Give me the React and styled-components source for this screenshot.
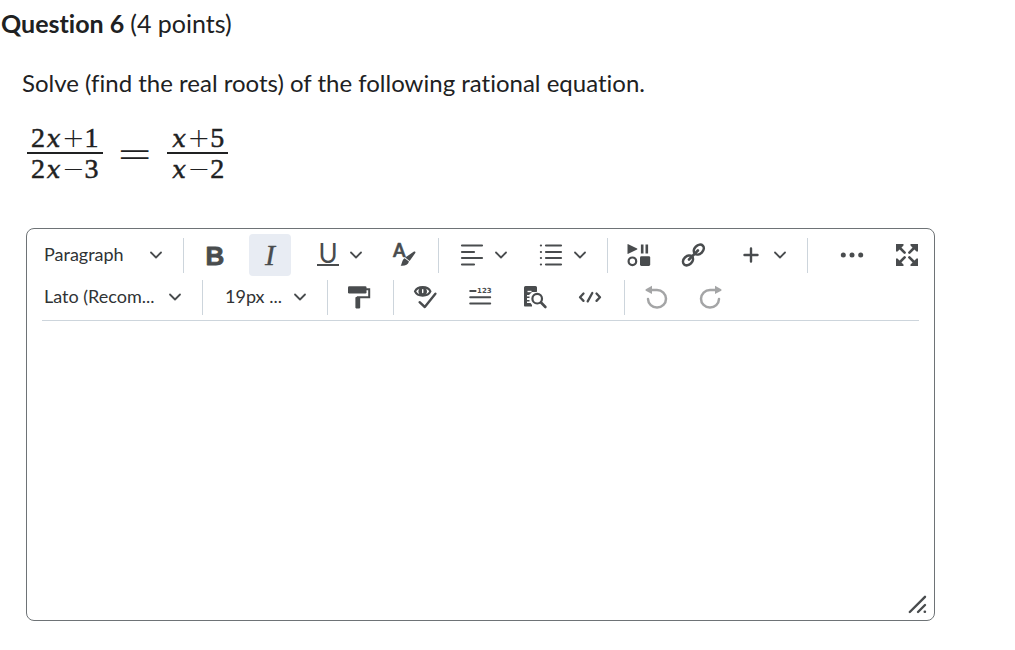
import React from 'react'
import styled, {createGlobalStyle} from 'styled-components'

const ICON = '#494c4e'
const LINE = '#cdd5dc'

const GlobalStyle = createGlobalStyle`
    *{
        box-sizing:border-box;
    }
    body{
        margin:0;
        background:#fff;
        color:#202122;
        font-family:Lato, sans-serif;
        font-variant-ligatures:none;
    }
`

const Page = styled.main`
    padding:8px 80px 24px 0;
`

const Heading = styled.h2`
    margin:0 0 30px;
    padding-left:1px;
    font-size:25px;
    line-height:30px;
    font-weight:700;
    span{
        font-weight:400;
    }
`

const Prompt = styled.p`
    margin:0 0 26px;
    padding-left:22px;
    font-size:24px;
    line-height:30px;
`

const Equation = styled.div`
    display:flex;
    align-items:center;
    gap:18px;
    margin:0 0 44px 27px;
    font-family:"Liberation Serif", serif;
    font-size:28px;
`

const Fraction = styled.span`
    display:flex;
    flex-direction:column;
`

const Term = styled.span`
    height:30px;
    padding:0 4px;
    border-bottom:${({over}) => over ? '2px solid #202122' : 0};
    line-height:${({over}) => over ? 28 : 30}px;
    text-align:center;
    white-space:nowrap;
    -webkit-text-stroke:.5px #202122;
    i{
        font-family:"DejaVu Math TeX Gyre", "Liberation Serif", serif;
        font-style:normal;
        font-size:24px;
        line-height:0;
    }
`

const Operator = styled.span`
    font-family:"DejaVu Sans", sans-serif;
    font-weight:200;
    font-size:27px;
    line-height:0;
    -webkit-text-stroke:0;
`

const Equals = styled(Operator)`
    display:flex;
    justify-content:center;
    width:28px;
    font-size:44px;
    line-height:28px;
`

const Editor = styled.section`
    position:relative;
    margin-left:26px;
    border:1px solid #6e7376;
    border-radius:8px;
    padding:5px 6px 5px 5px;
`

const Row = styled.div`
    display:flex;
    align-items:center;
    height:42px;
    gap:13px;
`

const Divider = styled.span`
    width:1px;
    height:35px;
    margin-right:-3px;
    background:${LINE};
`

const Tool = styled.button`
    display:flex;
    align-items:center;
    justify-content:${({split}) => split ? 'space-between' : 'center'};
    width:${({split}) => split ? 66 : 42}px;
    height:42px;
    padding:${({split}) => split ? '0 7px 0 11px' : 0};
    border:0;
    border-radius:4px;
    background:${({active}) => active ? '#e8ecf3' : 'transparent'};
    color:${ICON};
    &:disabled{
        color:#a4a5a6;
    }
    svg{
        flex:none;
        overflow:visible;
    }
`

const End = styled.div`
    display:flex;
    gap:13px;
    margin-left:auto;
`

const Picker = styled.label`
    display:grid;
    align-items:center;
    width:${({width}) => width}px;
    select, svg{
        grid-area:1 / 1;
    }
    svg{
        justify-self:end;
        margin-right:7px;
        color:${ICON};
        pointer-events:none;
    }
    select{
        appearance:none;
        width:100%;
        height:42px;
        padding:0 0 2px 12px;
        border:0;
        background:transparent;
        color:#303335;
        font-family:Lato, sans-serif;
        font-size:18px;
    }
`

const Rule = styled.hr`
    height:1px;
    margin:2px 9px 0 10px;
    border:0;
    background:${LINE};
`

const Answer = styled.textarea`
    display:block;
    width:100%;
    height:294px;
    padding:16px;
    border:0;
    outline:0;
    resize:none;
    background:transparent;
    font-family:Lato, sans-serif;
    font-size:18px;
`

const Grip = styled.svg`
    position:absolute;
    right:6px;
    bottom:5px;
`

const Icon = ({children}) => (
    <svg width="24" height="24" viewBox="0 0 24 24" fill="none" stroke="currentColor"
        strokeWidth="2.2" strokeLinecap="round" strokeLinejoin="round" aria-hidden="true">
        {children}
    </svg>
)

const Chevron = () => (
    <svg width="14" height="14" viewBox="0 0 14 14" fill="none" stroke="currentColor"
        strokeWidth="1.8" strokeLinecap="round" strokeLinejoin="round" aria-hidden="true">
        <path d="M2 4.5 7 9.5 12 4.5"/>
    </svg>
)

const Letter = ({children, ...rest}) => (
    <text fill="currentColor" stroke="none" textAnchor="middle" {...rest}>{children}</text>
)

const icons = {
    bold:<Letter x="12" y="22" fontFamily="Liberation Sans" fontWeight="700" fontSize="26" stroke="currentColor" strokeWidth=".8">B</Letter>,
    italic:<Letter x="12" y="22" fontFamily="Liberation Serif" fontStyle="italic" fontSize="30" stroke="currentColor" strokeWidth=".3">I</Letter>,
    underline:<>
        <Letter x="13" y="19.5" fontFamily="Lato" fontSize="26">U</Letter>
        <path d="M2 22H24" strokeWidth="2" strokeLinecap="butt"/>
    </>,
    brush:<>
        <Letter x="7.2" y="13.6" fontFamily="Lato" fontWeight="700" fontSize="18" stroke="currentColor" strokeWidth=".5">A</Letter>
        <path d="M21.6 8.8C22.6 7.8 24 8.8 23.3 10L17.6 18 13.2 14.6Z" fill="currentColor" stroke="none"/>
        <path d="M12.6 15.2 17 18.6C16 22 13 23.2 8.6 22.8 10 21.2 9.8 17 12.6 15.2Z" fill="currentColor" stroke="none"/>
    </>,
    align:<path d="M2 2.5H22M2 9H14M2 15H22M2 21.5H14"/>,
    list:<path d="M7 2.5H22M7 9H22M7 15H22M7 21.5H22M1.9 2.5H2M1.9 9H2M1.9 15H2M1.9 21.5H2"/>,
    media:<>
        <path d="M.5 1.5Q.5 .8 1.3 1.2L10.1 5.5Q10.8 6 10.1 6.5L1.3 10.8Q.5 11.2 .5 10.5Z" fill="currentColor" stroke="none"/>
        <path d="M15.2 1.5V10.5M19.8 1.5V10.5" strokeWidth="2.6" strokeLinecap="butt"/>
        <circle cx="5.4" cy="18.3" r="3.8"/>
        <rect x="13" y="13.2" width="10.2" height="9.8" rx="1.4" fill="currentColor" stroke="none"/>
    </>,
    link:<g strokeWidth="2.6">
        <ellipse cx="16.8" cy="6.6" rx="5.6" ry="4.2" transform="rotate(-45 16.8 6.6)"/>
        <ellipse cx="6" cy="17.4" rx="5.6" ry="4.2" transform="rotate(-45 6 17.4)"/>
        <path d="M7 16.5 15.9 7.5"/>
    </g>,
    plus:<path d="M12 5.5V18.5M5.5 12H18.5" strokeWidth="2.4"/>,
    more:<g fill="currentColor" stroke="none">
        <circle cx="3.3" cy="12" r="2.5"/><circle cx="12" cy="12" r="2.5"/><circle cx="20.7" cy="12" r="2.5"/>
    </g>,
    expand:<>
        <path d="M5 5 9.6 9.6M19 5 14.4 9.6M5 19 9.6 14.4M19 19 14.4 14.4" strokeWidth="2.6"/>
        <path d="M1 1H8.5V2.5L2.5 8.5H1ZM23 1H15.5V2.5L21.5 8.5H23ZM1 23H8.5V21.5L2.5 15.5H1ZM23 23H15.5V21.5L21.5 15.5H23Z" fill="currentColor" stroke="none"/>
    </>,
    roller:<>
        <rect x="1" y="1.2" width="18.5" height="7.2" rx="1.2" fill="currentColor" stroke="none"/>
        <path d="M19 4.2H22.2V12.2H10.8V16" strokeWidth="2" strokeLinejoin="miter" strokeLinecap="butt"/>
        <rect x="8.4" y="12" width="4.8" height="11.4" rx=".8" fill="currentColor" stroke="none"/>
    </>,
    spelling:<>
        <path d="M2 6.4C4.5 .8 14.9 .8 17.4 6.4 14.9 12 4.5 12 2 6.4Z"/>
        <circle cx="9.7" cy="6.4" r="4.3" fill="currentColor" stroke="none"/>
        <path d="M9.7 4.8V7.6" stroke="#fff" strokeWidth="1.4"/>
        <path d="M6.6 17.2 11.8 22 22.4 8.8" strokeWidth="2.4"/>
    </>,
    count:<>
        <path d="M2.2 6H7.6M2.2 12.2H22.2M2.2 18.4H22.2" strokeWidth="2"/>
        <Letter x="16.4" y="8.4" fontFamily="DejaVu Sans" fontWeight="700" fontSize="7">123</Letter>
    </>,
    preview:<>
        <path d="M2.5 1H12.5Q14 1 14 2.5V7H9L6 10H4V11.5H6.5V13H4V15H6.5V16.5H4V18H7.5L9 20V21.5H1.8Q1 21.5 1 20.5V2.5Q1 1 2.5 1Z" fill="currentColor" stroke="none"/>
        <path d="M4.5 6.5H8.5" stroke="#fff" strokeWidth="1.4" strokeLinecap="butt"/>
        <circle cx="14.2" cy="13.7" r="7" fill="#fff" stroke="none"/>
        <circle cx="14.2" cy="13.7" r="4.8" strokeWidth="2.2"/>
        <path d="M18 17.5 22.4 22" strokeWidth="2.6"/>
    </>,
    code:<path d="M5.5 8.5 2 12.2 5.5 15.9M18.5 8.5 22 12.2 18.5 15.9M14.3 8 9.7 16.4" strokeWidth="2.3"/>,
    undo:<>
        <path d="M4 14A9 8.8 0 1 0 13 5H7" strokeWidth="2.5"/>
        <path d="M1.8 4.2 8 .8V9L1.8 5.8Q1 5 1.8 4.2Z" fill="currentColor" stroke="none"/>
    </>,
    redo:<>
        <path d="M20 14A9 8.8 0 1 1 11 5H17" strokeWidth="2.5"/>
        <path d="M22.2 4.2 16 .8V9L22.2 5.8Q23 5 22.2 4.2Z" fill="currentColor" stroke="none"/>
    </>,
}

const ToolButton = ({icon, label, split, active, disabled}) => (
    <Tool type="button" aria-label={label} split={split ? 1 : undefined} active={active ? 1 : undefined} disabled={disabled}>
        <Icon>{icons[icon]}</Icon>
        {split && <Chevron/>}
    </Tool>
)

const Select = ({label, width, value}) => (
    <Picker width={width}>
        <select aria-label={label} defaultValue={value}>
            <option>{value}</option>
        </select>
        <Chevron/>
    </Picker>
)

export default function App(){
    return (<>
        <GlobalStyle/>
        <Page>
            <Heading>Question 6 <span>(4 points)</span></Heading>
            <Prompt>Solve (find the real roots) of the following rational equation.</Prompt>
            <Equation>
                <Fraction>
                    <Term over="true">2<i>𝑥</i><Operator>+</Operator>1</Term>
                    <Term>2<i>𝑥</i><Operator>−</Operator>3</Term>
                </Fraction>
                <Equals>=</Equals>
                <Fraction>
                    <Term over="true"><i>𝑥</i><Operator>+</Operator>5</Term>
                    <Term><i>𝑥</i><Operator>−</Operator>2</Term>
                </Fraction>
            </Equation>
            <Editor>
                <Row>
                    <Select label="Format" width={138} value="Paragraph"/>
                    <Divider/>
                    <ToolButton icon="bold" label="Bold"/>
                    <ToolButton icon="italic" label="Italic" active/>
                    <ToolButton icon="underline" label="Underline" split/>
                    <ToolButton icon="brush" label="Text color"/>
                    <Divider/>
                    <ToolButton icon="align" label="Align" split/>
                    <ToolButton icon="list" label="List" split/>
                    <Divider/>
                    <ToolButton icon="media" label="Insert media"/>
                    <ToolButton icon="link" label="Insert link"/>
                    <ToolButton icon="plus" label="Other insert options" split/>
                    <Divider/>
                    <End>
                        <ToolButton icon="more" label="More actions"/>
                        <ToolButton icon="expand" label="Fullscreen"/>
                    </End>
                </Row>
                <Row>
                    <Select label="Font" width={157} value="Lato (Recom..."/>
                    <Divider/>
                    <Select label="Font size" width={101} value="19px ..."/>
                    <Divider/>
                    <ToolButton icon="roller" label="Format painter"/>
                    <Divider/>
                    <ToolButton icon="spelling" label="Check accessibility"/>
                    <ToolButton icon="count" label="Word count"/>
                    <ToolButton icon="preview" label="Preview"/>
                    <ToolButton icon="code" label="Source code"/>
                    <Divider/>
                    <ToolButton icon="undo" label="Undo" disabled/>
                    <ToolButton icon="redo" label="Redo" disabled/>
                </Row>
                <Rule/>
                <Answer aria-label="Answer"/>
                <Grip width="20" height="20" viewBox="0 0 20 20" fill="none" stroke={ICON} strokeWidth="2.4" strokeLinecap="round">
                    <path d="M1.8 17 17 1.8M10 17 17 10M16.7 16.8H17"/>
                </Grip>
            </Editor>
        </Page>
    </>)
}
